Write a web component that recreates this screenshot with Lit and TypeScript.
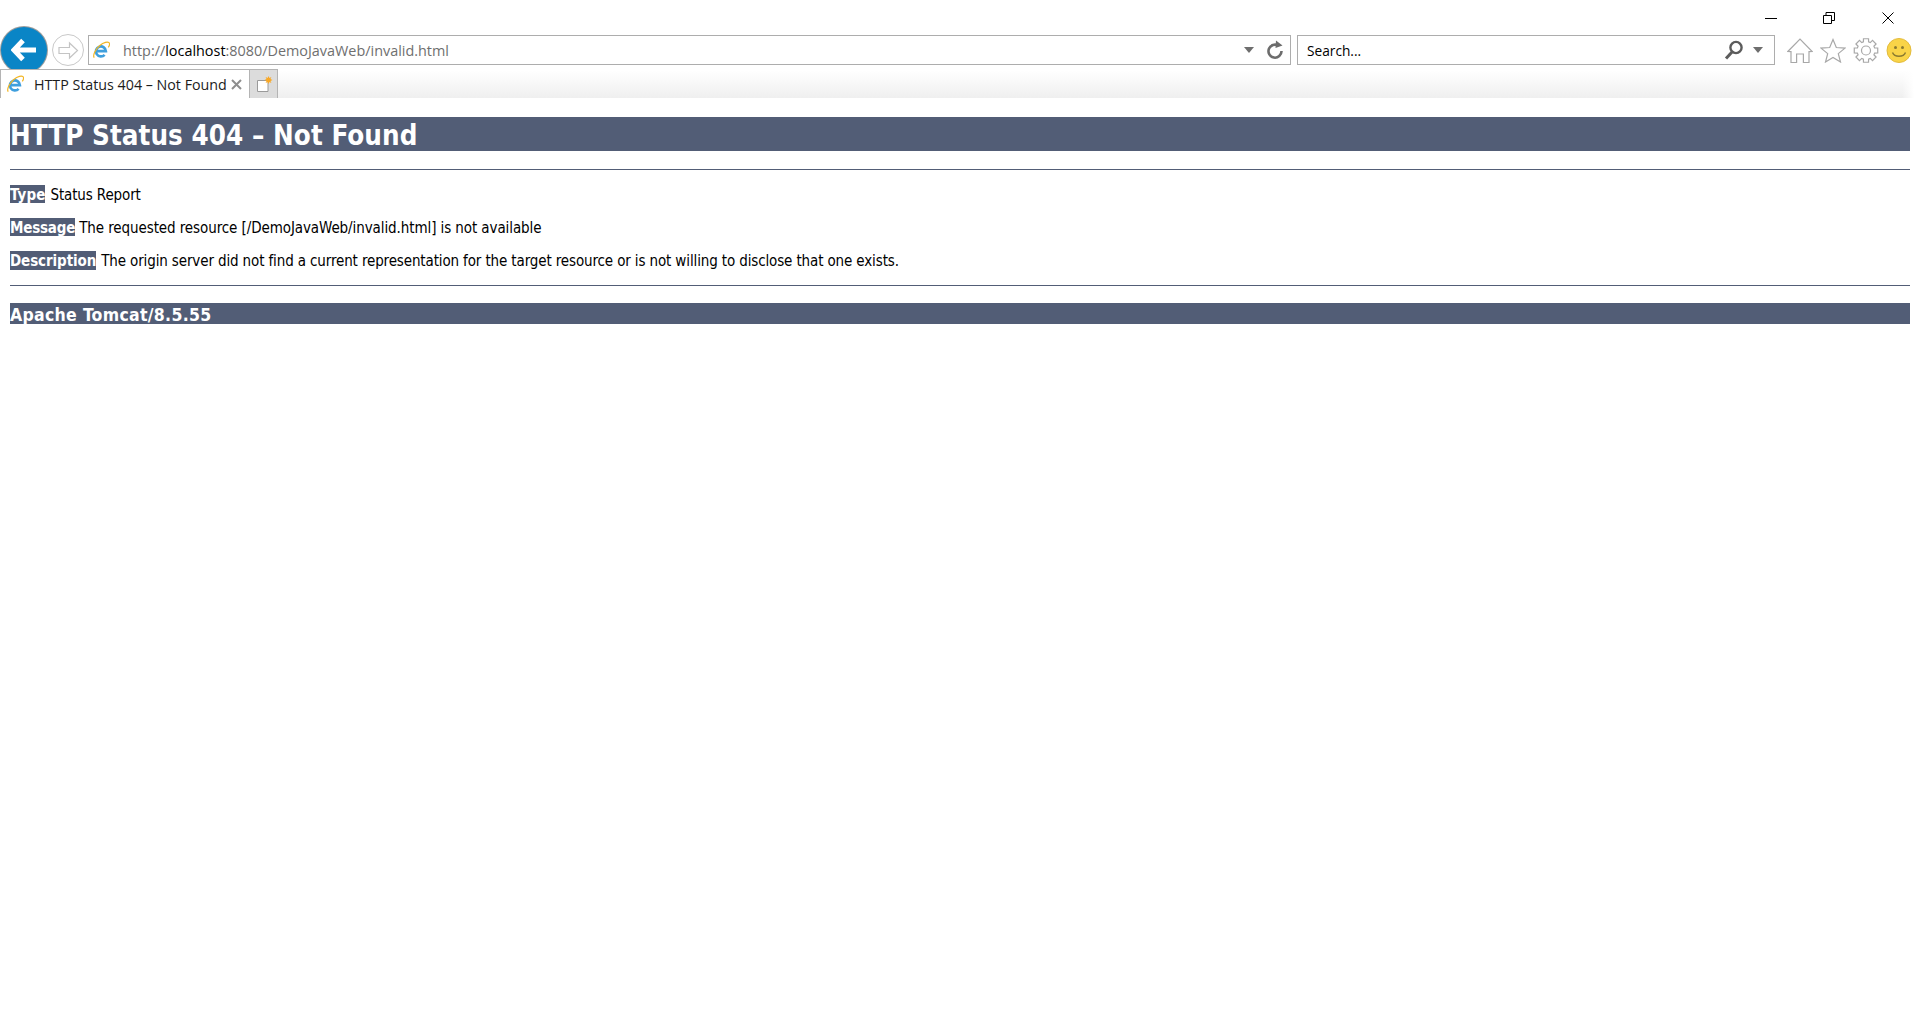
import { LitElement, html, css } from "lit";
import { customElement } from "lit/decorators.js";

const ieIcon = (size: number) => html`<svg class="ie" width=${size} height=${size} viewBox="0 0 18 18">
  <path d="M3.700 10.200H13.900A5 5 0 1 0 12.600 13.800" fill="none" stroke="#3f9fdd" stroke-width="2.700"/>
  <path d="M2.300 16.600C.4 14.800 3.300 8.300 7.800 4.500 11.800 1.200 15.700.4 17 1.700c1 1 .5 2.800-.7 4.600" fill="none" stroke="#f2b625" stroke-width="1.200"/>
</svg>`;

const gearPath = (() => {
  const pts: string[] = [];
  const cx = 13, cy = 12.5, outer = 12, inner = 9;
  const teeth = 8;
  for (let i = 0; i < teeth; i++) {
    const a = (i / teeth) * Math.PI * 2;
    const step = (Math.PI * 2) / teeth;
    const angles: [number, number][] = [
      [a - step * 0.27, outer],
      [a + step * 0.27, outer],
      [a + step * 0.37, inner],
      [a + step * 0.63, inner],
    ];
    for (const [t, r] of angles) {
      pts.push(`${(cx + Math.sin(t) * r).toFixed(2)} ${(cy - Math.cos(t) * r).toFixed(2)}`);
    }
  }
  return `M${pts.join("L")}Z`;
})();

@customElement("app-root")
export class AppRoot extends LitElement {
  static styles = css`
    :host { display: block; background: #fff; min-height: 1030px; font-family: "Open Sans", "Liberation Sans", sans-serif; color: #000; }
    .titlebar { height: 35px; display: flex; justify-content: flex-end; align-items: flex-start; box-sizing: border-box; }
    .winicon { display: block; margin-top: 12px; }
    .min { margin-right: 46px; }
    .restore { margin-right: 47px; }
    .close { margin-right: 26px; }
    .navbar { height: 30px; display: flex; align-items: stretch; position: relative; z-index: 1; margin-bottom: 4px; }
    .back { width: 46px; height: 46px; flex: none; margin: -8px 0 0 1px; border-radius: 50%; background: #0a85c6; box-shadow: 0 0 0 1px #9d9d9d; display: flex; align-items: center; justify-content: center; }
    .forward { width: 32px; height: 32px; flex: none; margin: -1px 0 0 5px; box-sizing: border-box; border: 1px solid #c9c9c9; border-radius: 50%; display: flex; align-items: center; justify-content: center; background: #fff; }
    .field { box-sizing: border-box; height: 30px; border: 1px solid #adadad; display: flex; align-items: center; background: #fff; }
    .address { width: 1203px; margin-left: 4px; padding-left: 3px; flex: none; }
    .url { margin-left: 13px; font-size: 14.4px; color: #6f6f6f; flex: 1; white-space: nowrap; }
    .url b { font-weight: 400; color: #000; }
    .search { width: 478px; margin-left: 6px; padding-left: 9px; flex: none; }
    .search span { flex: 1; font-size: 13.7px; color: #000; }
    .caret { width: 0; height: 0; border: 5px solid transparent; border-top: 6px solid #6e6e6e; border-bottom: 0; flex: none; }
    .refresh { margin: 0 6px 0 12px; display: block; }
    .magnifier { margin-right: 9px; display: block; }
    .search .caret { margin-right: 11px; }
    .tools { display: flex; align-items: center; margin-left: 12px; gap: 7px; }
    .tabstrip { height: 29px; position: relative; z-index: 2; box-sizing: border-box; display: flex; background: linear-gradient(to right, transparent calc(100% - 18px), #fff calc(100% - 6px)), linear-gradient(#ffffff 5%, #efefef); }
    .tab { width: 250px; height: 29px; box-sizing: border-box; background: #fff; border: 1px solid #b4b4b4; border-bottom: 0; display: flex; align-items: center; padding-left: 5px; flex: none; }
    .tab .title { margin-left: 10px; font-size: 14.25px; color: #1c1c1c; white-space: nowrap; flex: 1; }
    .tab svg.x { margin-right: 7px; display: block; }
    .newtab { width: 28px; height: 29px; box-sizing: border-box; background: #dcdcdc; border: 1px solid #b4b4b4; border-left: 0; border-bottom: 0; display: flex; align-items: center; padding-left: 7px; flex: none; }
    .page { padding: 19px 10px 0; font-family: "DejaVu Sans Condensed", "DejaVu Sans", sans-serif; }
    h1, h3, p { margin: 0; }
    h1 { height: 34px; line-height: 36px; font-size: 27.5px; letter-spacing: 0.05px; font-weight: 700; color: #fff; background: #525d76; white-space: nowrap; }
    hr { border: 0; height: 1px; background: #525d76; margin: 0; }
    .hr1 { margin-top: 18px; }
    .hr2 { margin-top: 15px; }
    .lines { margin-top: 15px; display: flex; flex-direction: column; gap: 15px; }
    p { height: 18px; line-height: 20px; font-size: 15px; letter-spacing: -0.13px; white-space: nowrap; }
    p.wide { letter-spacing: -0.09px; }
    p:last-child { height: 19px; }
    p b { display: inline-block; background: #525d76; color: #fff; font-weight: 700; height: 18px; margin-right: 5px; letter-spacing: 0; }
    p:last-child b { height: 19px; }
    p b.type { letter-spacing: 0.1px; }
    p b.message { letter-spacing: -0.2px; margin-right: 4px; }
    p b.description { letter-spacing: -0.1px; }
    h3 { margin-top: 17px; height: 21px; line-height: 24px; font-size: 17.5px; letter-spacing: 0.3px; font-weight: 700; color: #fff; background: #525d76; white-space: nowrap; }
  `;

  render() {
    return html`
      <div class="titlebar">
        <svg class="winicon min" width="12" height="12" viewBox="0 0 12 12"><path d="M0 6.500h12" stroke="#000" fill="none"/></svg>
        <svg class="winicon restore" width="12" height="12" viewBox="0 0 12 12"><path d="M.5 3.500h8v8h-8zM3 3.500V.5h8.500v8H8.500" stroke="#000" fill="none"/></svg>
        <svg class="winicon close" width="12" height="12" viewBox="0 0 12 12"><path d="M.5.5l11 11M11.500.5l-11 11" stroke="#000" fill="none"/></svg>
      </div>
      <div class="navbar">
        <div class="back">
          <svg width="26" height="24" viewBox="0 0 26 24"><path d="M12 2.500 3 12l9 9.500M4 12h21" fill="none" stroke="#fff" stroke-width="5"/></svg>
        </div>
        <div class="forward">
          <svg width="21" height="19" viewBox="0 0 21 19"><path d="M1 6.500h10.500V2l8 7.500-8 7.500v-4.500H1z" fill="#fff" stroke="#c4c4c4" stroke-width="1.200"/></svg>
        </div>
        <div class="field address">
          ${ieIcon(18)}
          <div class="url">http://<b>localhost</b>:8080/DemoJavaWeb/invalid.html</div>
          <div class="caret"></div>
          <svg class="refresh" width="18" height="20" viewBox="0 0 18 20"><path d="M12.500 5.700a6.500 6.500 0 1 0 3 5.300" fill="none" stroke="#6c6c6c" stroke-width="2.600"/><path d="M10 .5l6.500 5-7 2.500z" fill="#6c6c6c"/></svg>
        </div>
        <div class="field search">
          <span>Search...</span>
          <svg class="magnifier" width="20" height="20" viewBox="0 0 20 20"><circle cx="12" cy="7.500" r="5.600" fill="none" stroke="#5c5c5c" stroke-width="2.400"/><path d="M8.500 11.500 2 18.500" stroke="#5c5c5c" stroke-width="3" fill="none"/></svg>
          <div class="caret"></div>
        </div>
        <div class="tools">
          <svg width="26" height="25" viewBox="0 0 26 25"><path d="M.8 13.500 13 1.200l12.200 12.300-3.200.1v10.900h-5.600v-8.500H9.600v8.500H4V13.600z" fill="none" stroke="#a8a8a8" stroke-width="1.200"/></svg>
          <svg width="26" height="25" viewBox="0 0 26 25"><path d="m13 1.500 3.300 8 8.700.6-6.700 5.500 2.200 8.400L13 19.400 5.500 24l2.200-8.400L1 10.100l8.700-.6z" fill="none" stroke="#a8a8a8" stroke-width="1.200"/></svg>
          <svg width="26" height="25" viewBox="0 0 26 25"><g fill="none" stroke="#a8a8a8" stroke-width="1.200"><circle cx="13" cy="12.500" r="4.500"/><path d=${gearPath}/></g></svg>
          <svg width="26" height="25" viewBox="0 0 26 25"><circle cx="13" cy="12.500" r="12" fill="#f9d448" stroke="#e3bb3d"/><circle cx="9.500" cy="9.500" r="1.500" fill="#8a7a30"/><circle cx="16.500" cy="9.500" r="1.500" fill="#8a7a30"/><path d="M6.500 14.500c2 5 11 5 13 0" fill="none" stroke="#8a7a30" stroke-width="1.500"/></svg>
        </div>
      </div>
      <div class="tabstrip">
        <div class="tab">
          ${ieIcon(18)}
          <div class="title">HTTP Status 404 – Not Found</div>
          <svg class="x" width="11" height="11" viewBox="0 0 11 11"><path d="M1 1l9 9M10 1l-9 9" stroke="#8e8e8e" stroke-width="2" fill="none"/></svg>
        </div>
        <div class="newtab">
          <svg width="16" height="17" viewBox="0 0 16 17"><path d="M.5 4.500h10.500v11H.5z" fill="#fff" stroke="#9a9a9a"/><path d="m11.500 0 .9 2 2-.9-.9 2 2 .9-2 .9.9 2-2-.9-.9 2-.9-2-2 .9.9-2-2-.9 2-.9-.9-2 2 .9z" fill="#f9a825"/></svg>
        </div>
      </div>
      <main class="page">
        <h1>HTTP Status 404 – Not Found</h1>
        <hr class="hr1" />
        <div class="lines">
          <p><b class="type">Type</b>Status Report</p>
          <p class="wide"><b class="message">Message</b>The requested resource [/DemoJavaWeb/invalid.html] is not available</p>
          <p><b class="description">Description</b>The origin server did not find a current representation for the target resource or is not willing to disclose that one exists.</p>
        </div>
        <hr class="hr2" />
        <h3>Apache Tomcat/8.5.55</h3>
      </main>
    `;
  }
}
